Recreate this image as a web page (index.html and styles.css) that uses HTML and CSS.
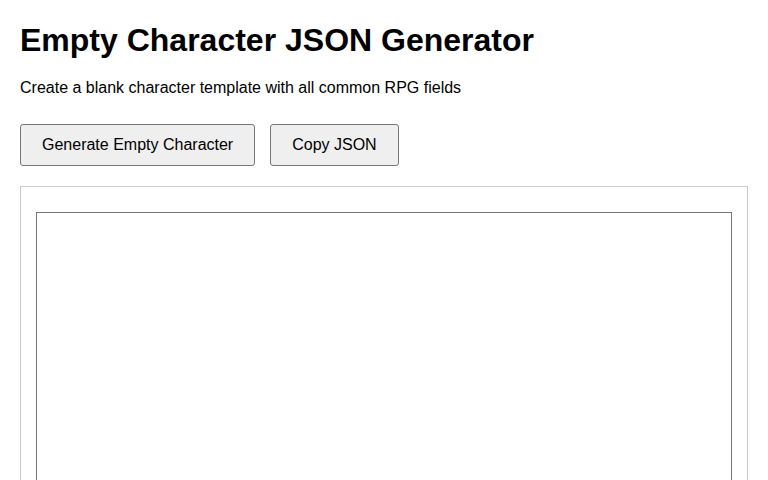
FILE: index.html
```html
<!DOCTYPE html>
<html>
<head>
<meta charset="utf-8">
<link rel="stylesheet" href="styles.css">
</head>
<body>
<h1 class="title">Empty Character JSON Generator</h1>
<p class="desc">Create a blank character template with all common RPG fields</p>
<div class="actions">
  <button class="btn">Generate Empty Character</button>
  <button class="btn">Copy JSON</button>
</div>
<div class="output">
  <textarea class="json" readonly></textarea>
</div>
</body>
</html>
```
FILE: styles.css
```css
html, body {
  margin: 0;
  padding: 0;
}
body {
  padding: 20px;
  font-family: "Liberation Sans", Arial, sans-serif;
  color: #000;
  background: #fff;
}
.title {
  font-size: 32px;
  font-weight: bold;
  padding-top: 2px;
  margin: 0 0 20px 0;
}
.desc {
  font-size: 16px;
  margin: 0 0 27px 0;
}
.actions {
  display: flex;
  gap: 15px;
  margin-bottom: 20px;
}
.btn {
  font-family: "Liberation Sans", Arial, sans-serif;
  font-size: 16px;
  padding: 0 21px;
  height: 42px;
  background: #efefef;
  border: 1px solid #767676;
  border-radius: 3px;
  color: #000;
}
.output {
  border: 1px solid #ccc;
  padding: 25px 15px 15px 15px;
}
.json {
  display: block;
  width: 100%;
  box-sizing: border-box;
  height: 400px;
  margin: 0;
  border: 1px solid #767676;
  font-family: "Liberation Mono", monospace;
  font-size: 13px;
  resize: none;
}
```
